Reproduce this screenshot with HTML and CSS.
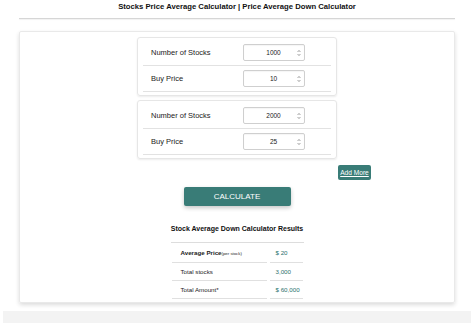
FILE: index.html
```
<!DOCTYPE html>
<html lang="en">
	<head>
		<meta charset="UTF-8" />
		<meta name="viewport" content="width=device-width, initial-scale=1.0" />
		<title>Stocks Price Average Calculator</title>
		<link rel="stylesheet" href="styles.css">
	</head>
	<body>
		<div class="page">
			<h1 class="title">Stocks Price Average Calculator | Price Average Down Calculator</h1>
			<hr class="rule" />
			<div class="card">
				<div class="groups">
					<div class="group">
						<div class="row">
							<span class="label">Number of Stocks</span>
							<div class="num">
								<span class="num-val">1000</span>
								<svg class="spin" width="4" height="8" viewBox="0 0 4 8"><path d="M0.6 3 L2 1.4 L3.4 3 M0.6 5 L2 6.6 L3.4 5" fill="none" stroke="#8a8a8a" stroke-width="0.8"/></svg>
							</div>
						</div>
						<div class="row">
							<span class="label">Buy Price</span>
							<div class="num">
								<span class="num-val">10</span>
								<svg class="spin" width="4" height="8" viewBox="0 0 4 8"><path d="M0.6 3 L2 1.4 L3.4 3 M0.6 5 L2 6.6 L3.4 5" fill="none" stroke="#8a8a8a" stroke-width="0.8"/></svg>
							</div>
						</div>
					</div>
					<div class="group">
						<div class="row">
							<span class="label">Number of Stocks</span>
							<div class="num">
								<span class="num-val">2000</span>
								<svg class="spin" width="4" height="8" viewBox="0 0 4 8"><path d="M0.6 3 L2 1.4 L3.4 3 M0.6 5 L2 6.6 L3.4 5" fill="none" stroke="#8a8a8a" stroke-width="0.8"/></svg>
							</div>
						</div>
						<div class="row">
							<span class="label">Buy Price</span>
							<div class="num">
								<span class="num-val">25</span>
								<svg class="spin" width="4" height="8" viewBox="0 0 4 8"><path d="M0.6 3 L2 1.4 L3.4 3 M0.6 5 L2 6.6 L3.4 5" fill="none" stroke="#8a8a8a" stroke-width="0.8"/></svg>
							</div>
						</div>
					</div>
				</div>
				<div class="add-row">
					<button class="btn add-more">Add More</button>
				</div>
				<button class="btn calculate">CALCULATE</button>
				<h2 class="results-title">Stock Average Down Calculator Results</h2>
				<table class="results">
					<tr>
						<td class="key strong">Average Price<small>(per stock)</small></td>
						<td class="val">$ 20</td>
					</tr>
					<tr>
						<td class="key">Total stocks</td>
						<td class="val">3,000</td>
					</tr>
					<tr>
						<td class="key">Total Amount*</td>
						<td class="val">$ 60,000</td>
					</tr>
				</table>
			</div>
		</div>
		<div class="footer-bar"></div>
	</body>
</html>
```

FILE: styles.css
```
body,
html {
	margin: 0;
	padding: 0;
	background: #ffffff;
}
body {
	font-family: 'Liberation Sans', Arial, Helvetica, sans-serif;
	color: #222222;
}
.page {
	width: 436px;
	margin: 0 auto;
}
.title {
	margin: 0;
	padding-top: 2px;
	font-size: 7.7px;
	line-height: 10px;
	font-weight: bold;
	text-align: center;
	color: #111111;
}
.rule {
	margin: 6px 0 0;
	border: 0;
	border-top: 1px solid #d6d6d6;
	box-shadow: 0 1px 1px rgba(0, 0, 0, 0.06);
}
.card {
	margin-top: 12px;
	border: 1px solid #e9e9e9;
	border-radius: 2px;
	box-shadow: 0 2px 4px rgba(0, 0, 0, 0.14);
	padding: 5px 0 3px;
	display: flex;
	flex-direction: column;
	align-items: center;
}
.groups {
	display: flex;
	flex-direction: column;
	gap: 4px;
	width: 200px;
}
.group {
	border: 1px solid #e6e6e6;
	border-radius: 3px;
	box-shadow: 0 1px 2px rgba(0, 0, 0, 0.08);
	padding: 2px 5px 3px;
}
.row {
	height: 25px;
	border-bottom: 1px solid #e2e2e2;
	display: flex;
	align-items: center;
	padding: 0 26px 0 8px;
	font-size: 7.5px;
}
.label {
	flex: 1;
}
.num {
	width: 60px;
	height: 15px;
	border: 1px solid #cfcfcf;
	border-radius: 2px;
	display: flex;
	align-items: center;
	font-size: 6.5px;
	box-shadow: inset 0 1px 1px rgba(0, 0, 0, 0.04);
}
.num-val {
	flex: 1;
	text-align: center;
	padding-left: 6px;
}
.spin {
	margin-right: 3px;
}
.add-row {
	width: 268px;
	display: flex;
	justify-content: flex-end;
	margin-top: 6px;
}
.btn {
	border: 0;
	background: #397c77;
	color: #ffffff;
	font-family: 'Liberation Sans', Arial, Helvetica, sans-serif;
	cursor: pointer;
	padding: 0;
}
.add-more {
	width: 33px;
	height: 15px;
	border-radius: 2px;
	font-size: 6.6px;
	text-decoration: underline;
}
.calculate {
	margin-top: 7px;
	width: 107px;
	height: 19px;
	border-radius: 2px;
	font-size: 8px;
	box-shadow: 0 2px 4px rgba(0, 0, 0, 0.22);
}
.results-title {
	margin: 18px 0 0;
	width: 133px;
	font-size: 7px;
	line-height: 10px;
	padding-bottom: 8px;
	text-align: center;
	border-bottom: 1px solid #dddddd;
	color: #111111;
}
.results {
	width: 137px;
	border-collapse: separate;
	border-spacing: 3px 0;
	font-size: 6.2px;
}
.results td {
	height: 17px;
	border-bottom: 1px solid #e0e0e0;
	padding: 0;
}
.results tr:first-child td {
	height: 19px;
}
.key {
	width: 86px;
	padding-left: 9px !important;
}
.key.strong {
	font-weight: bold;
}
.key small {
	font-size: 4.3px;
	font-weight: normal;
}
.val {
	padding-left: 6px !important;
	color: #2b726d;
}
.footer-bar {
	margin: 8px 3px 0;
	height: 12px;
	background: #f3f3f3;
}
```
